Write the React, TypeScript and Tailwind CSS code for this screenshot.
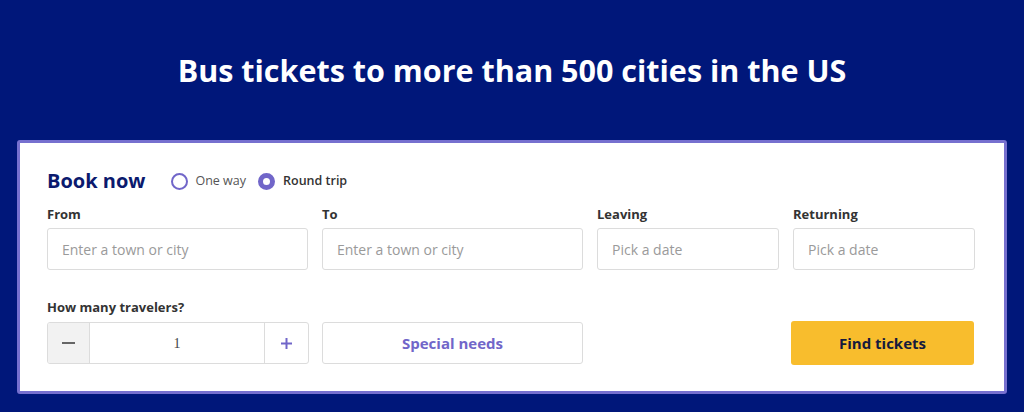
import React from "react";

export default function App() {
  const font = { fontFamily: "'Open Sans', 'Noto Sans', sans-serif" };
  return (
    <div className="w-[1024px] h-[412px] bg-[#00177a] overflow-hidden" style={font}>
      <h1 className="pt-[51px] h-[140px] text-center text-white text-[30.5px] leading-[38px] font-bold">
        Bus tickets to more than 500 cities in the US
      </h1>
      <div className="mx-[17px] border-[3px] border-[#7670cf] rounded-[3px] bg-white px-[27px] pt-[26px] pb-[26px]">
        <div className="flex items-center h-[24px]">
          <span className="text-[20px] font-bold text-[#0b1a6e] leading-none mr-[26px]">Book now</span>
          <label className="flex items-center mr-[12px]">
            <span className="w-[17px] h-[17px] rounded-full border-2 border-[#7166c9] bg-white" />
            <span className="ml-[7px] text-[12.5px] text-[#555]">One way</span>
          </label>
          <label className="flex items-center">
            <span className="w-[17px] h-[17px] rounded-full border-[5px] border-[#7166c9] bg-white" />
            <span className="ml-[8px] text-[12.5px] font-semibold text-[#333]">Round trip</span>
          </label>
        </div>
        <div className="mt-[13px] grid grid-cols-[261px_261px_182px_182px] gap-x-[14px]">
          {[
            ["From", "Enter a town or city"],
            ["To", "Enter a town or city"],
            ["Leaving", "Pick a date"],
            ["Returning", "Pick a date"],
          ].map(([l, p]) => (
            <div key={l}>
              <div className="h-[16px] leading-[16px] text-[13px] font-bold text-[#333]">{l}</div>
              <div className="mt-[6px] h-[42px] border border-[#dcdcdc] rounded-[3px] flex items-center pl-[14px] text-[14px] text-[#9a9a9a]">
                {p}
              </div>
            </div>
          ))}
        </div>
        <div className="mt-[29px] h-[16px] leading-[16px] text-[13px] font-bold text-[#333]">How many travelers?</div>
        <div className="mt-[6px] grid grid-cols-[262px_261px_182px_183px] gap-x-[13px] items-center">
          <div className="h-[42px] border border-[#dcdcdc] rounded-[3px] flex overflow-hidden">
            <div className="w-[42px] bg-[#f2f2f2] border-r border-[#dcdcdc] flex items-center justify-center">
              <span className="w-[13px] h-[2px] bg-[#666]" />
            </div>
            <div className="flex-1 flex items-center justify-center text-[14px] text-[#444]" style={{ fontFamily: "'Liberation Serif', serif" }}>1</div>
            <div className="w-[44px] border-l border-[#dcdcdc] flex items-center justify-center">
              <svg width="13" height="13" viewBox="0 0 13 13">
                <path d="M6.5 1v11M1 6.5h11" stroke="#7166c9" strokeWidth="2" />
              </svg>
            </div>
          </div>
          <div className="h-[42px] border border-[#dcdcdc] rounded-[3px] flex items-center justify-center text-[15px] font-bold text-[#7166c9]">
            Special needs
          </div>
          <div />
          <div className="h-[44px] bg-[#f8bd2d] rounded-[3px] flex items-center justify-center text-[15px] font-bold text-[#151a3d]">
            Find tickets
          </div>
        </div>
      </div>
    </div>
  );
}
